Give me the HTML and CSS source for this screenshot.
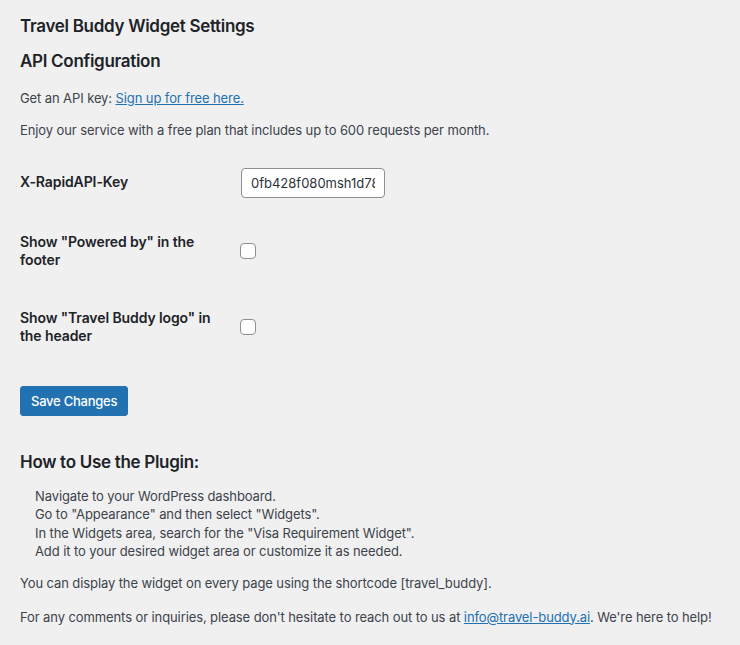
FILE: index.html
```html
<!DOCTYPE html>
<html lang="en">
<head>
<meta charset="utf-8">
<title>Travel Buddy Widget Settings</title>
<link rel="stylesheet" href="styles.css">
</head>
<body>
<div class="wrap">
  <h1 class="page-title">Travel Buddy Widget Settings</h1>
  <form class="settings">
    <h2 class="section-title">API Configuration</h2>
    <p class="intro">Get an API key: <a href="#">Sign up for free here.</a></p>
    <p class="intro">Enjoy our service with a free plan that includes up to 600 requests per month.</p>
    <div class="form-table">
      <div class="row row-text">
        <label class="th" for="key">X-RapidAPI-Key</label>
        <div class="td"><input id="key" class="text-input" type="text" value="0fb428f080msh1d78cf8a3e5b"></div>
      </div>
      <div class="row">
        <label class="th" for="powered">Show "Powered by" in the footer</label>
        <div class="td"><input id="powered" class="check" type="checkbox"></div>
      </div>
      <div class="row">
        <label class="th" for="logo">Show "Travel Buddy logo" in the header</label>
        <div class="td"><input id="logo" class="check" type="checkbox"></div>
      </div>
    </div>
    <div class="submit"><button type="button" class="button-primary">Save Changes</button></div>
  </form>
  <h2 class="section-title how">How to Use the Plugin:</h2>
  <ol class="steps">
    <li>Navigate to your WordPress dashboard.</li>
    <li>Go to "Appearance" and then select "Widgets".</li>
    <li>In the Widgets area, search for the "Visa Requirement Widget".</li>
    <li>Add it to your desired widget area or customize it as needed.</li>
  </ol>
  <p class="note">You can display the widget on every page using the shortcode [travel_buddy].</p>
  <p class="note">For any comments or inquiries, please don't hesitate to reach out to us at <a href="#">info@travel-buddy.ai</a>. We're here to help!</p>
</div>
</body>
</html>
```
FILE: styles.css
```css
* { box-sizing: border-box; }
html, body { margin: 0; padding: 0; }
body {
  background: #f0f0f1;
  color: #3c434a;
  font-family: Inter, "Noto Sans", "Liberation Sans", sans-serif;
  font-size: 13px;
  line-height: 1.4em;
  letter-spacing: -0.1px;
}
.wrap { padding: 0 20px; }
.page-title {
  margin: 0;
  padding: 15px 0 0;
  font-size: 17px;
  font-weight: 600;
  line-height: 22px;
  letter-spacing: -0.3px;
  color: #1d2327;
}
.section-title {
  margin: 0;
  font-size: 17px;
  font-weight: 600;
  line-height: 22px;
  letter-spacing: -0.3px;
  color: #1d2327;
}
.settings .section-title { margin-top: 13px; }
.intro { margin: 0; line-height: 18px; }
.settings .section-title + .intro { margin-top: 17px; }
.intro + .intro { margin-top: 14px; }
a { color: #2271b1; text-decoration: underline; }
.form-table { margin-top: 14px; }
.row { display: flex; align-items: center; }
.row-text { align-items: flex-start; }
.th {
  width: 220px;
  padding: 20px 20px 20px 0;
  font-size: 14px;
  font-weight: 600;
  color: #1d2327;
  line-height: 18px;
  letter-spacing: -0.1px;
}
.td { display: flex; align-items: center; padding: 15px 0; }
.text-input {
  width: 144px;
  height: 30px;
  margin-left: 1px;
  padding: 0 9px;
  border: 1px solid #8c8f94;
  border-radius: 4px;
  background: #fff;
  color: #2c3338;
  font-family: inherit;
  font-size: 13px;
  letter-spacing: 0;
  line-height: 2;
  outline: none;
}
.check {
  appearance: none;
  -webkit-appearance: none;
  width: 16px;
  height: 16px;
  margin: 0;
  border: 1px solid #8c8f94;
  border-radius: 4px;
  background: #fff;
}
.submit { margin-top: 21px; }
.button-primary {
  height: 30px;
  padding: 0 10px;
  border: 1px solid #2271b1;
  border-radius: 3px;
  background: #2271b1;
  color: #fff;
  font-family: inherit;
  font-size: 13px;
  font-weight: 500;
  letter-spacing: -0.25px;
  line-height: 28px;
}
.how { margin-top: 35px; }
.steps {
  list-style: none;
  margin: 14px 0 0;
  padding: 0 0 0 15px;
  line-height: 18.4px;
}
.note { margin: 13px 0 0; line-height: 18px; }
.note + .note { margin-top: 16px; }
```
